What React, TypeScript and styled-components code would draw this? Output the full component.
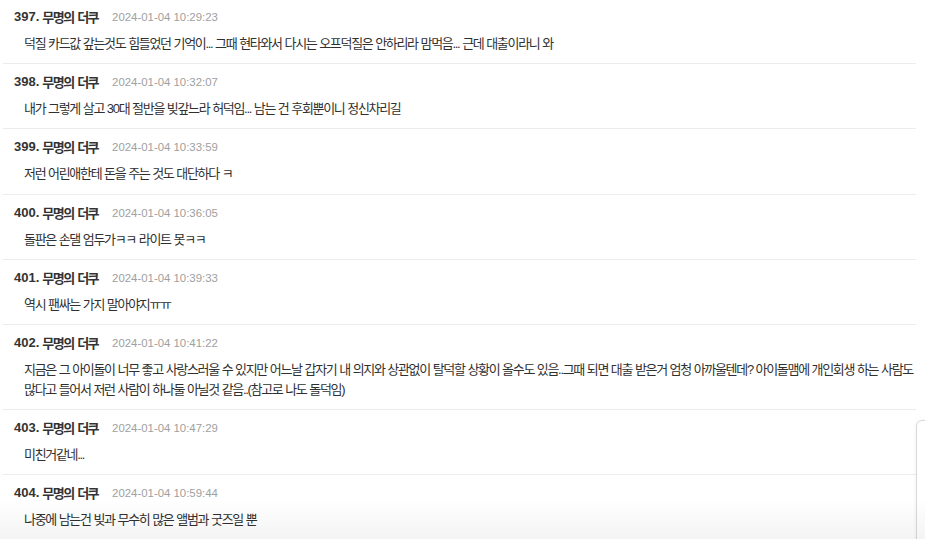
import React from "react";
import styled, { createGlobalStyle } from "styled-components";

const GlobalStyle = createGlobalStyle`
  html, body { margin: 0; padding: 0; background: #ffffff; }
  body { overflow: hidden; font-family: "Liberation Sans", "Noto Sans CJK KR", sans-serif; }
`;

type Post = { no: number; date: string; text: string };

const posts: Post[] = [
  { no: 397, date: "2024-01-04 10:29:23", text: "덕질 카드값 갚는것도 힘들었던 기억이... 그때 현타와서 다시는 오프덕질은 안하리라 맘먹음... 근데 대출이라니 와" },
  { no: 398, date: "2024-01-04 10:32:07", text: "내가 그렇게 살고 30대 절반을 빚갚느라 허덕임... 남는 건 후회뿐이니 정신차리길" },
  { no: 399, date: "2024-01-04 10:33:59", text: "저런 어린애한테 돈을 주는 것도 대단하다 ㅋ" },
  { no: 400, date: "2024-01-04 10:36:05", text: "돌판은 손댈 엄두가ㅋㅋ 라이트 못ㅋㅋ" },
  { no: 401, date: "2024-01-04 10:39:33", text: "역시 팬싸는 가지 말아야지ㅠㅠ" },
  { no: 402, date: "2024-01-04 10:41:22", text: "지금은 그 아이돌이 너무 좋고 사랑스러울 수 있지만 어느날 갑자기 내 의지와 상관없이 탈덕할 상황이 올수도 있음..그때 되면 대출 받은거 엄청 아까울텐데? 아이돌맴에 개인회생 하는 사람도 많다고 들어서 저런 사람이 하나둘 아닐것 같음..(참고로 나도 돌덕임)" },
  { no: 403, date: "2024-01-04 10:47:29", text: "미친거같네..." },
  { no: 404, date: "2024-01-04 10:59:44", text: "나중에 남는건 빚과 무수히 많은 앨범과 굿즈일 뿐" },
];

const List = styled.div`
  margin: -2px 0 0 3px;
  width: 913px;
  display: flex;
  flex-direction: column;
`;

const Row = styled.div`
  display: flex;
  flex-direction: column;
  gap: 8px;
  padding: 9px 2px 9.2px 11px;
  border-top: 1px solid #ececec;
  &:first-child { border-top-color: transparent; }
`;

const Header = styled.div`
  display: flex;
  align-items: center;
  height: 18px;
  line-height: 18px;
`;

const Num = styled.span`
  font-family: "Liberation Sans", sans-serif;
  font-weight: 700;
  font-size: 13px;
  color: #333333;
  margin-right: 3px;
`;

const Name = styled.span`
  font-family: "Noto Sans CJK KR", sans-serif;
  font-weight: 700;
  font-size: 13px;
  letter-spacing: -1.5px;
  word-spacing: 2px;
  color: #333333;
`;

const DateText = styled.span`
  font-family: "Liberation Sans", sans-serif;
  font-size: 11.4px;
  color: #a0a0a0;
  margin-left: 14px;
`;

const Body = styled.div`
  padding-left: 10px;
  font-family: "Liberation Sans", "Noto Sans CJK KR", sans-serif;
  font-size: 13px;
  letter-spacing: -1.32px;
  word-spacing: 0.5px;
  line-height: 20px;
  color: #303030;
`;

const SidePanel = styled.div`
  position: fixed;
  left: 916px;
  top: 420px;
  width: 120px;
  height: 200px;
  background: #ffffff;
  border: 1px solid #d9d9d9;
  border-radius: 6px;
  box-shadow: 0 0 4px rgba(0, 0, 0, 0.06);
`;

const BottomFade = styled.div`
  position: fixed;
  left: 0;
  right: 0;
  bottom: 0;
  height: 40px;
  pointer-events: none;
  background: linear-gradient(to bottom, rgba(0, 0, 0, 0), rgba(0, 0, 0, 0.045));
`;

export default function App() {
  return (
    <>
      <GlobalStyle />
      <List>
        {posts.map((p) => (
          <Row key={p.no}>
            <Header>
              <Num>{p.no}.</Num>
              <Name>무명의 더쿠</Name>
              <DateText>{p.date}</DateText>
            </Header>
            <Body>{p.text}</Body>
          </Row>
        ))}
      </List>
      <SidePanel />
      <BottomFade />
    </>
  );
}
